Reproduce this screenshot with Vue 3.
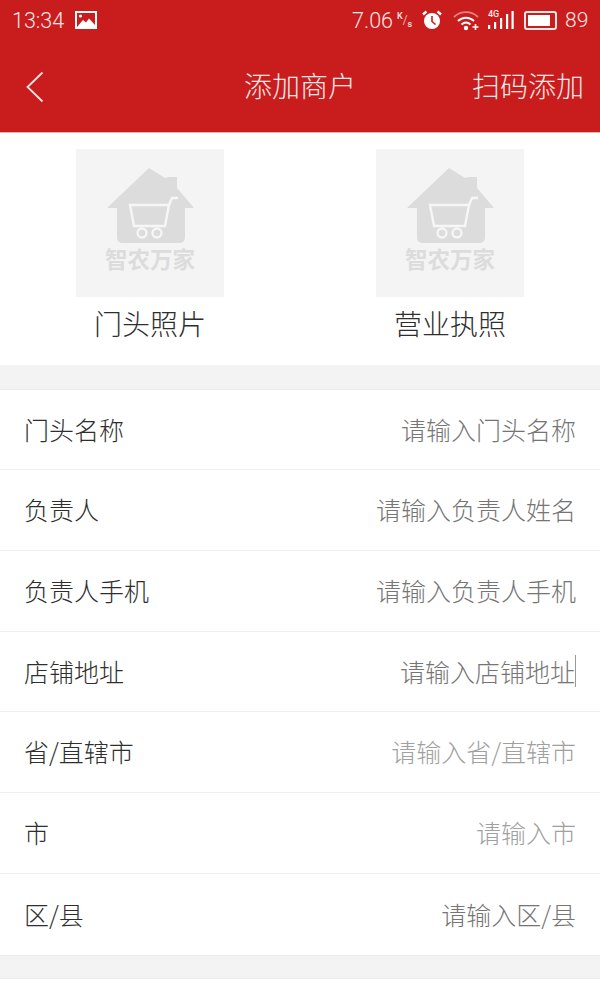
<script setup>
const photos = ['门头照片', '营业执照'];

const fields = [
    { label: '门头名称', hint: '请输入门头名称', height: 80 },
    { label: '负责人', hint: '请输入负责人姓名', height: 81 },
    { label: '负责人手机', hint: '请输入负责人手机', height: 81 },
    { label: '店铺地址', hint: '请输入店铺地址', height: 80, focus: true },
    { label: '省/直辖市', hint: '请输入省/直辖市', height: 81, faint: true },
    { label: '市', hint: '请输入市', height: 81, faint: true },
    { label: '区/县', hint: '请输入区/县', height: 81 }
];
</script>

<template>
    <div class="page">
        <header class="top">
            <div class="status">
                <div class="status-left">
                    <span class="time">13:34</span>
                    <svg width="22" height="18" viewBox="0 0 22 18">
                        <rect width="22" height="18" fill="#fff" />
                        <rect x="2" y="2" width="18" height="14" fill="#c91c1c" />
                        <circle cx="5.5" cy="5" r="1.6" fill="#fff" />
                        <path d="M2 16 L8 9 L11 11.5 L14 7.5 L20 14 L20 16 Z" fill="#fff" />
                    </svg>
                </div>
                <div class="status-right">
                    <span class="speed">7.06</span>
                    <span class="unit"><sup>K</sup>/<sub>s</sub></span>
                    <svg class="alarm" width="20" height="20" viewBox="0 0 20 20">
                        <circle cx="10" cy="11" r="8" fill="#fff" />
                        <path d="M1 4.5 L4.5 1.5 M15.5 1.5 L19 4.5" stroke="#fff" stroke-width="2.4" />
                        <path d="M10 6 V11.5 L13.5 14.5" stroke="#c91c1c" stroke-width="1.6" fill="none" />
                    </svg>
                    <svg class="wifi" width="27" height="21" viewBox="0 0 27 21">
                        <path d="M1 7 C7.5 0.5 18.5 0.5 25 7" stroke="#e88080" stroke-width="1.8" fill="none" />
                        <path d="M5 11 C9.5 6.5 16.5 6.5 21 11" stroke="#fff" stroke-width="2" fill="none" />
                        <path d="M8.5 14.5 C11.5 11.8 14.5 11.8 17.5 14.5" stroke="#fff" stroke-width="2" fill="none" />
                        <circle cx="13" cy="18" r="2.2" fill="#fff" />
                        <path d="M22.5 14 V20 M19.5 17 H25.5" stroke="#fff" stroke-width="1.6" />
                    </svg>
                    <div class="signal">
                        <span class="net">4G</span>
                        <svg width="26" height="20" viewBox="0 0 26 20">
                            <rect x="0" y="15" width="2.2" height="4" fill="#fff" />
                            <rect x="6" y="12" width="2.2" height="7" fill="#fff" />
                            <rect x="12" y="8" width="2.2" height="11" fill="#fff" />
                            <rect x="18" y="4" width="2.2" height="15" fill="#fff" />
                            <rect x="23.5" y="1" width="2.2" height="18" fill="#fff" />
                        </svg>
                    </div>
                    <div class="battery"><span class="level"></span></div>
                    <span class="percent">89</span>
                </div>
            </div>
            <nav class="nav">
                <svg class="back" width="20" height="32" viewBox="0 0 20 32">
                    <path d="M17.5 1.5 L2.5 16 L17.5 30.5" stroke="#fbe4e4" stroke-width="1.8" fill="none" />
                </svg>
                <span class="title">添加商户</span>
                <span class="action">扫码添加</span>
            </nav>
        </header>

        <section class="photos">
            <div v-for="name in photos" :key="name" class="photo">
                <div class="thumb">
                    <svg width="87" height="75" viewBox="0 0 87 75">
                        <path d="M42 0 L58 10 L62 9 L70 9 L70 20 L87 40 L78 40 L78 69 Q78 75 72 75 L16 75 Q10 75 10 69 L10 40 L0 40 Z" fill="#dcdcdc" />
                        <path d="M23 37 H62 L58 58 H27 Z" fill="none" stroke="#f6f6f6" stroke-width="2.4" />
                        <path d="M62 37 L65 30 H71" fill="none" stroke="#f6f6f6" stroke-width="2.4" />
                        <circle cx="35" cy="65" r="4.5" fill="none" stroke="#f6f6f6" stroke-width="2.4" />
                        <circle cx="50" cy="65" r="4.5" fill="none" stroke="#f6f6f6" stroke-width="2.4" />
                    </svg>
                    <span class="brand">智农万家</span>
                </div>
                <span class="photo-name">{{ name }}</span>
            </div>
        </section>

        <div class="gap"></div>

        <form class="fields" @submit.prevent>
            <div
                v-for="field in fields"
                :key="field.label"
                class="field"
                :style="{ height: field.height + 'px' }"
            >
                <span class="label">{{ field.label }}</span>
                <span class="hint" :class="{ faint: field.faint, focus: field.focus }">{{ field.hint }}</span>
            </div>
        </form>

        <div class="gap gap-bottom"></div>
    </div>
</template>

<style>
body {
    background: #fff;
}
</style>

<style scoped>
.page {
    width: 600px;
    height: 1000px;
    overflow: hidden;
    background: #fff;
    font-family: "Noto Sans CJK SC", "Noto Sans", sans-serif;
    font-weight: 300;
}

.top {
    background: #c91c1c;
    height: 133px;
    color: #fbe9e9;
    border-bottom: 1px solid #e6b5b5;
    box-sizing: border-box;
}

.status {
    height: 40px;
    padding: 0 13px 0 12px;
    display: flex;
    justify-content: space-between;
    align-items: center;
    font-family: Roboto, sans-serif;
    font-weight: 300;
}

.status-left {
    display: flex;
    align-items: center;
    gap: 11px;
}

.time {
    font-size: 21.5px;
}

.status-right {
    display: flex;
    align-items: center;
}

.speed {
    font-size: 21.5px;
}

.unit {
    width: 17px;
    font-size: 12px;
    line-height: 20px;
    margin-left: 4px;
    margin-right: 8px;
    white-space: nowrap;
}

.unit sup,
.unit sub {
    font-size: 9px;
    font-weight: 500;
    line-height: 0;
}

.alarm {
    margin-right: 11px;
}

.wifi {
    margin-right: 8px;
}

.signal {
    position: relative;
    width: 26px;
    height: 20px;
    margin-right: 10px;
}

.net {
    position: absolute;
    left: 0;
    top: -1px;
    font-size: 9px;
    font-weight: 500;
    line-height: 10px;
}

.battery {
    width: 33px;
    height: 19px;
    box-sizing: border-box;
    border: 2px solid #fbe9e9;
    border-radius: 3px;
    padding: 2px;
    margin-right: 8px;
}

.level {
    display: block;
    height: 100%;
    width: 89%;
    background: #fff;
}

.percent {
    font-size: 21px;
    width: 22px;
}

.nav {
    height: 92px;
    padding: 0 16px 2px 25px;
    display: flex;
    align-items: center;
    justify-content: space-between;
    position: relative;
    box-sizing: border-box;
    font-size: 28px;
}

.back {
    margin-top: 4px;
}

.title {
    position: absolute;
    left: 244px;
}

.photos {
    height: 232px;
    display: grid;
    grid-template-columns: 300px 300px;
    box-sizing: border-box;
    padding-top: 16px;
}

.photo {
    display: flex;
    flex-direction: column;
    align-items: center;
}

.thumb {
    width: 148px;
    height: 148px;
    background: #f4f4f4;
    display: flex;
    flex-direction: column;
    align-items: center;
    padding-top: 19px;
    box-sizing: border-box;
}

.brand {
    font-size: 22.5px;
    line-height: 28px;
    margin-top: 1px;
    font-weight: 700;
    color: #dcdcdc;
}

.photo-name {
    margin-top: 6px;
    font-size: 28px;
    line-height: 40px;
    color: #2e2e2e;
}

.gap {
    height: 25px;
    background: #f3f3f3;
    border-bottom: 1px solid #ebebeb;
    box-sizing: border-box;
}

.gap-bottom {
    height: 24px;
    border-top: 1px solid #ebebeb;
}

.field {
    display: flex;
    align-items: center;
    justify-content: space-between;
    padding: 0 24px 2px;
    box-sizing: border-box;
    border-bottom: 1px solid #f0f0f0;
    font-size: 25px;
}

.field:last-child {
    border-bottom: none;
}

.label {
    color: #2e2e2e;
}

.hint {
    color: #757575;
}

.hint.faint {
    color: #a0a0a0;
}

.hint.focus {
    border-right: 1px solid #999;
    line-height: 32px;
}
</style>
